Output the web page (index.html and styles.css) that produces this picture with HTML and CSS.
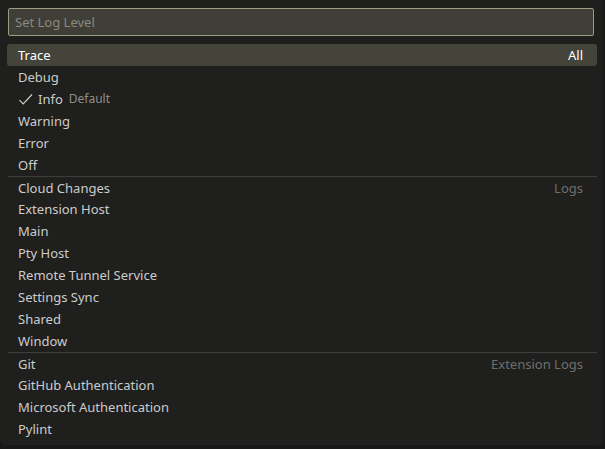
FILE: index.html
```html
<!DOCTYPE html>
<html>
<head>
<meta charset="utf-8">
<link rel="stylesheet" href="styles.css">
</head>
<body>
<div class="widget">
  <div class="input-wrap"><div class="input">Set Log Level</div></div>
  <div class="list">
    <div class="row selected"><span class="label">Trace</span><span class="tag tag-sel">All</span></div>
    <div class="row"><span class="label">Debug</span></div>
    <div class="row"><span class="check"><svg width="16" height="16" viewBox="0 0 16 16"><path d="M1.5 9.2 L5.2 13 L14 3.5" fill="none" stroke="#cccccc" stroke-width="1.2"/></svg></span><span class="label">Info</span><span class="desc">Default</span></div>
    <div class="row"><span class="label">Warning</span></div>
    <div class="row"><span class="label">Error</span></div>
    <div class="row"><span class="label">Off</span></div>
    <div class="row sep"><span class="label">Cloud Changes</span><span class="tag">Logs</span></div>
    <div class="row"><span class="label">Extension Host</span></div>
    <div class="row"><span class="label">Main</span></div>
    <div class="row"><span class="label">Pty Host</span></div>
    <div class="row"><span class="label">Remote Tunnel Service</span></div>
    <div class="row"><span class="label">Settings Sync</span></div>
    <div class="row"><span class="label">Shared</span></div>
    <div class="row"><span class="label">Window</span></div>
    <div class="row sep"><span class="label">Git</span><span class="tag">Extension Logs</span></div>
    <div class="row"><span class="label">GitHub Authentication</span></div>
    <div class="row"><span class="label">Microsoft Authentication</span></div>
    <div class="row"><span class="label">Pylint</span></div>
  </div>
</div>
</body>
</html>
```
FILE: styles.css
```css
html, body {
  margin: 0;
  padding: 0;
  background: #181818;
  width: 605px;
  height: 449px;
  overflow: hidden;
}
body {
  font-family: "Noto Sans", "Open Sans", sans-serif;
  font-size: 13px;
  color: #cccccc;
}
.widget {
  width: 603px;
  height: 445px;
  background: #1f1f1d;
  border-radius: 0 0 6px 6px;
  box-sizing: border-box;
  padding-top: 8px;
}
.input-wrap {
  padding: 0 9px 0 8px;
}
.input {
  height: 28px;
  box-sizing: border-box;
  border: 1px solid #9c9c82;
  background: #3f3f37;
  color: #8a8a7e;
  padding: 0 6px;
  line-height: 26px;
  border-radius: 2px;
}
.list {
  margin-top: 8px;
  padding: 0 6px 0 7px;
}
.row {
  height: 22px;
  box-sizing: border-box;
  line-height: 20px;
  display: flex;
  align-items: center;
  padding: 1px 14px 1px 11px;
  border-radius: 3px;
  position: relative;
  white-space: nowrap;
}
.row.selected {
  background: #44443b;
  color: #ffffff;
}
.row.sep {
  padding-top: 2px;
  padding-bottom: 0;
}
.row.sep::before {
  content: "";
  position: absolute;
  left: 1px;
  right: 0;
  top: 0;
  border-top: 1px solid #3d3d3d;
}
.label {
  flex: none;
}
.desc {
  margin-left: 6px;
  color: #8f8f8a;
  font-size: 12px;
}
.check {
  width: 16px;
  height: 16px;
  margin-right: 4px;
  display: flex;
}
.tag {
  margin-left: auto;
  color: #6e6e6a;
}
.tag-sel {
  color: #ffffff;
}
```
